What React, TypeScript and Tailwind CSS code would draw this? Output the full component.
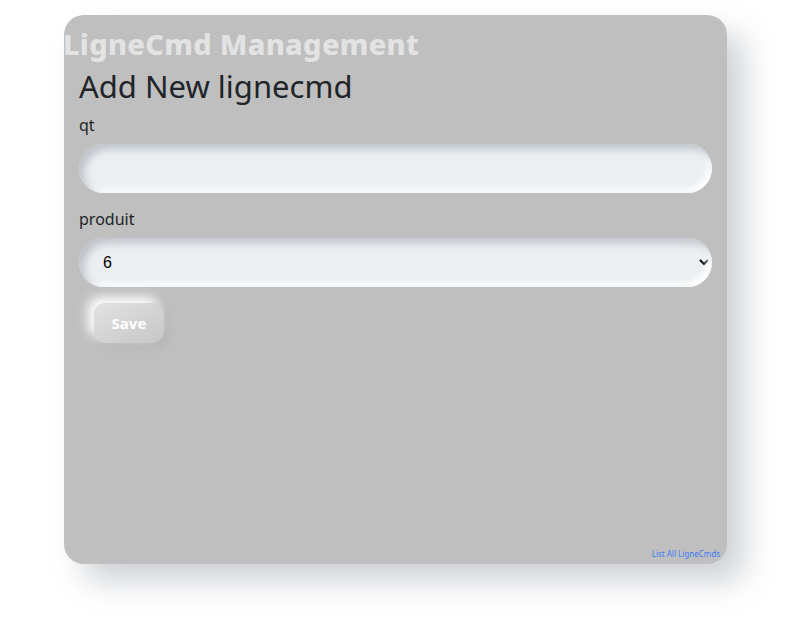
import React, { useState } from 'react';

export default function App() {
    const [qt, setQt] = useState('');
    const [produit, setProduit] = useState('6');

    return (
        <div className="min-h-screen bg-white pt-[15px] pl-[64px]" style={{ fontFamily: '"Noto Sans", "Open Sans", sans-serif' }}>
            <div className="w-[663px] h-[549px] bg-[#bfbfbf] rounded-[20px] shadow-[18px_18px_30px_rgba(120,130,140,0.35)] flex flex-col pt-[12px] pb-[4px]">
                <h2 className="text-[29px] leading-[34px] font-extrabold text-[#e3e3e3] -ml-[1px] tracking-[0.3px]">LigneCmd Management</h2>
                <div className="px-[15px]">
                    <h1 className="text-[31px] leading-[41px] text-[#212529] mt-[5px] mb-[6px]">Add New lignecmd</h1>
                    <label className="block text-[16px] leading-[24px] text-[#212529] mb-[7px]">qt</label>
                    <input
                        type="text"
                        value={qt}
                        onChange={e => setQt(e.target.value)}
                        className="w-full h-[49px] rounded-full bg-[#ebeff2] px-6 outline-none shadow-[inset_5px_5px_8px_#bcc2c8,inset_-4px_-4px_6px_#ffffff]"
                    />
                    <label className="block text-[16px] leading-[24px] text-[#212529] mt-[14px] mb-[7px]">produit</label>
                    <select
                        value={produit}
                        onChange={e => setProduit(e.target.value)}
                        className="w-full h-[49px] rounded-full bg-[#ebeff2] pl-[20px] pr-3 outline-none text-[16px] text-black shadow-[inset_5px_5px_8px_#bcc2c8,inset_-4px_-4px_6px_#ffffff]"
                        style={{ fontFamily: '"Liberation Sans", Arial, sans-serif' }}
                    >
                        <option value="6">6</option>
                        <option value="7">7</option>
                    </select>
                    <button className="mt-[16px] ml-[15px] w-[70px] h-[40px] rounded-[12px] bg-gradient-to-br from-[#e2e2e2] to-[#c6c6c6] text-white font-bold text-[15px] shadow-[-6px_-6px_12px_#ffffff,4px_4px_8px_#b5b5b5]">
                        Save
                    </button>
                </div>
                <div className="mt-auto flex justify-end pr-[7px]">
                    <a href="#" className="text-[8px] leading-[12px] text-[#3d7bf5]">List All LigneCmds</a>
                </div>
            </div>
        </div>
    );
}
